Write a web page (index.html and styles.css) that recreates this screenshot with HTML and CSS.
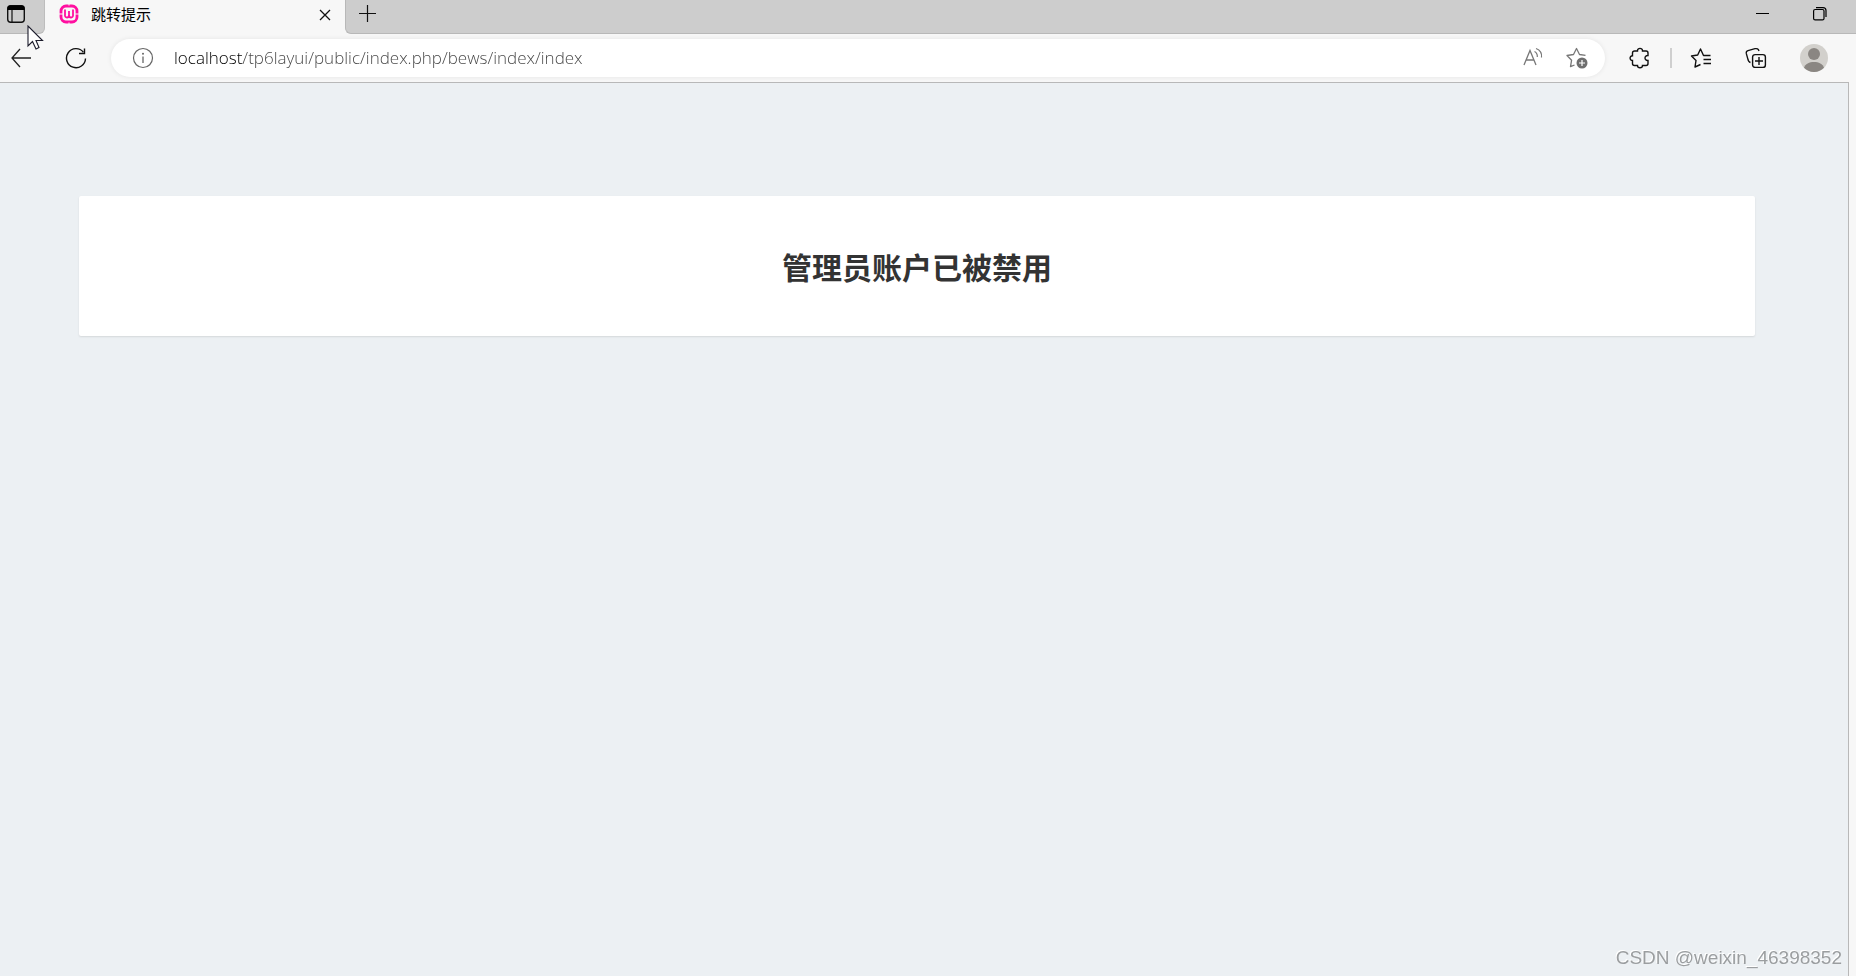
FILE: index.html
```html
<!DOCTYPE html>
<html lang="zh-CN">
<head>
  <meta charset="UTF-8" />
  <meta name="viewport" content="width=device-width, initial-scale=1.0"/>
  <title>跳转提示</title>
  <link rel="stylesheet" href="styles.css">
</head>
<body>
  <header class="browser">
    <div class="tabs">
      <div class="tabs-left">
        <button type="button" class="icon-btn" aria-label="标签页操作">
          <svg width="20" height="20" viewBox="0 0 20 20"><rect x="1.7" y="1.7" width="16.6" height="16.6" rx="3" fill="none" stroke="#111" stroke-width="1.4"/><path d="M1.5 6V4.5a3 3 0 0 1 3-3h11a3 3 0 0 1 3 3V6z" fill="#000"/><path d="M6 6v12" stroke="#111" stroke-width="1.2"/></svg>
        </button>
      </div>
      <div class="tab">
        <svg width="20" height="20" viewBox="0 0 20 20"><rect x="2" y="2" width="16" height="16" rx="5" fill="none" stroke="#ff0fa0" stroke-width="2.8"/><path d="M0 10h4M16 10h4M10 0v1.5M10 18.5v1.5" stroke="#f7f7f7" stroke-width="1"/><path d="M6 5.5v5.5a2 2 0 0 0 2 2.5q2 0 2-2.5V7v4q0 2.5 2 2.5a2 2 0 0 0 2-2.5V5.5" fill="none" stroke="#ff0fa0" stroke-width="1.8"/></svg>
        <span class="tab-title">跳转提示</span>
        <button type="button" class="icon-btn" aria-label="关闭标签页">
          <svg width="12" height="20" viewBox="0 0 12 20"><path d="M1 6l10 10M11 6L1 16" stroke="#111" stroke-width="1.3"/></svg>
        </button>
      </div>
      <div class="tabs-right">
        <button type="button" class="icon-btn" aria-label="新建标签页">
          <svg width="20" height="20" viewBox="0 0 20 20"><path d="M9.5 1v17M1 9.5h17" stroke="#111" stroke-width="1.2"/></svg>
        </button>
        <div class="window-btns">
          <button type="button" class="icon-btn" aria-label="最小化">
            <svg width="14" height="20" viewBox="0 0 14 20"><path d="M0 9.5h13" stroke="#000"/></svg>
          </button>
          <button type="button" class="icon-btn" aria-label="还原">
            <svg width="14" height="20" viewBox="0 0 14 20"><rect x=".6" y="5.5" width="10.4" height="10.4" rx="1.5" fill="none" stroke="#000" stroke-width="1.2"/><path d="M3 3.6h7a3 3 0 0 1 3 3V13" fill="none" stroke="#000" stroke-width="1.2"/></svg>
          </button>
        </div>
      </div>
    </div>

    <div class="toolbar">
      <button type="button" class="icon-btn" aria-label="返回">
        <svg width="22" height="22" viewBox="0 0 22 22"><path d="M10 2L2 11l8 9M2 11h19" fill="none" stroke="#222" stroke-width="1.3"/></svg>
      </button>
      <button type="button" class="icon-btn refresh" aria-label="刷新">
        <svg width="22" height="22" viewBox="0 0 22 22"><path d="M20.5 11.5A9.5 9.5 0 1 1 18.4 5.2" fill="none" stroke="#111" stroke-width="1.4"/><path d="M19.5 1.5V6.5H14" fill="none" stroke="#111" stroke-width="1.4"/></svg>
      </button>
      <div class="address">
        <svg width="22" height="22" viewBox="0 0 22 22"><circle cx="11" cy="11" r="9.5" fill="none" stroke="#666" stroke-width="1.2"/><path d="M11 9.5V16" stroke="#666" stroke-width="1.3"/><circle cx="11" cy="6.7" r="1" fill="#666"/></svg>
        <input class="url" type="text" aria-label="地址栏" value="localhost/tp6layui/public/index.php/bews/index/index">
        <button type="button" class="icon-btn" aria-label="大声朗读">
          <svg width="22" height="22" viewBox="0 0 22 22"><path d="M1 18L7 3.5 13 18M3 13h8" fill="none" stroke="#777" stroke-width="1.3"/><path d="M11.5 4.5c2 1 3 3 2.8 5.5M13 1.5c4 1.5 6 5 5.5 9" fill="none" stroke="#777" stroke-width="1.2"/></svg>
        </button>
        <button type="button" class="icon-btn" aria-label="添加到收藏夹">
          <svg width="24" height="24" viewBox="0 0 24 24"><path d="M20.5 9.3L14.5 8.5 11.5 2.5 8.5 8.5 2 9.5 6.6 14.2 5.5 20.7 9.5 19" fill="none" stroke="#777" stroke-width="1.3" stroke-linejoin="round"/><circle cx="17" cy="17" r="5.5" fill="#6e6e6e"/><path d="M17 14v6M14 17h6" stroke="#fff" stroke-width="1.2"/></svg>
        </button>
      </div>
      <div class="tools">
        <button type="button" class="icon-btn" aria-label="扩展">
          <svg width="22" height="22" viewBox="0 0 22 22"><path d="M5.5 4H8.5C8.3 0.5 13.7 0.5 13.5 4H17a2 2 0 0 1 2 2V8.5C15 8 15 14 19 13.5V16.5a2 2 0 0 1-2 2H13.5C13.5 21.5 8.5 21.5 8.5 18.5H5.5a2 2 0 0 1-2-2V13.5C0.3 13.5 0.3 8.7 3.5 8.7V6a2 2 0 0 1 2-2z" fill="none" stroke="#111" stroke-width="1.4"/></svg>
        </button>
        <span class="divider"></span>
        <button type="button" class="icon-btn" aria-label="收藏夹">
          <svg width="22" height="22" viewBox="0 0 22 22"><path d="M20.5 8.5H13.5L10.5 2 7.7 8 1.5 9 6 13.5 5 20 10.5 17.5" fill="none" stroke="#111" stroke-width="1.4" stroke-linejoin="round"/><path d="M13.5 12.5h7.5M13.5 16.5h7.5" stroke="#111" stroke-width="1.4"/></svg>
        </button>
        <button type="button" class="icon-btn" aria-label="集锦">
          <svg width="22" height="22" viewBox="0 0 22 22"><path d="M5.5 15.5C3.5 15 3 13 2.7 11.5L1.3 6.5C1 5 1.5 4 3 3.6L10 1.7C12 1.2 13.5 2 14 4" fill="none" stroke="#111" stroke-width="1.3"/><rect x="7.6" y="7.6" width="12.8" height="12.8" rx="2.5" fill="none" stroke="#111" stroke-width="1.4"/><path d="M14 10v8M10 14h8" stroke="#111" stroke-width="1.4"/></svg>
        </button>
        <button type="button" class="icon-btn" aria-label="个人资料">
          <svg width="28" height="28" viewBox="0 0 28 28"><circle cx="14" cy="14" r="14" fill="#d2d0cc"/><circle cx="14" cy="10" r="6" fill="#8a8682"/><path d="M4 23.8C6 16 22 16 24 23.8A14 14 0 0 1 4 23.8z" fill="#8a8682"/></svg>
        </button>
      </div>
    </div>
  </header>

  <main class="page">
    <div class="message">
      <h1>管理员账户已被禁用</h1>
    </div>
  </main>
  <div class="watermark">CSDN @weixin_46398352</div>

  <svg class="cursor" width="17" height="26" viewBox="0 0 17 26"><path d="M1 1v20l4.500-4.500L9 24l3-1.500-3-7h6.500z" fill="#fff" stroke="#1c1c2c" stroke-width="1.1"/></svg>
</body>
</html>
```

FILE: styles.css
```css
* { box-sizing: border-box; }
body { margin: 0; min-height: 100vh; display: flex; flex-direction: column; background: #f7f7f7; font-family: "Noto Sans CJK SC", sans-serif; color: #333; }
svg { display: block; flex-shrink: 0; }
.icon-btn { display: block; padding: 0; border: none; background: none; cursor: pointer; }

/* tabs */
.tabs { display: flex; height: 34px; }
.tabs-left, .tabs-right { background: #cdcdcd; border-bottom: 1px solid #b8b8b8; padding-top: 4px; }
.tabs-left { width: 45px; padding-left: 6px; border-right: 1px solid #bdbdbd; border-bottom-right-radius: 6px; }
.tabs-right { flex: 1; display: flex; align-items: flex-start; justify-content: space-between; padding-left: 12px; padding-right: 29px; border-left: 1px solid #b8b8b8; border-bottom-left-radius: 6px; }
.tab { width: 300px; display: flex; align-items: flex-start; gap: 12px; padding: 4px 14px 0; }
.tab-title { flex: 1; font-size: 15px; line-height: 20px; color: #000; }
.window-btns { display: flex; gap: 43px; }

/* toolbar */
.toolbar { display: flex; align-items: center; height: 48px; padding: 0 28px 0 10px; }
.refresh { margin-left: 33px; }
.address { flex: 1; display: flex; align-items: center; gap: 20px; height: 38px; margin-left: 24px; padding: 0 16px 0 21px; border-radius: 19px; background: #fff; box-shadow: 0 0 5px rgba(0,0,0,0.08); }
.url { flex: 1; min-width: 0; padding: 0; border: none; outline: none; font-family: "Open Sans", sans-serif; font-size: 17px; font-weight: 300; line-height: 24px; color: transparent; background: linear-gradient(to right, #000 69px, #444 69px); background-clip: text; -webkit-background-clip: text; }
.tools { display: flex; align-items: center; margin-left: 24px; }
.divider { width: 2px; height: 20px; margin: 0 18px 0 19px; background: #cfcfcf; }
.tools .icon-btn + .icon-btn { margin-left: 33px; }

/* page */
.page { flex: 1; margin-right: 7px; padding: 113px 93px 0 79px; background: #ecf0f3; border-top: 1px solid #b8b8b8; border-right: 1px solid #b8b8b8; }
.message { padding: 48px 20px; background: #fff; border-radius: 2px; box-shadow: 0 1px 2px rgba(0,0,0,0.1); text-align: center; }
h1 { margin: 0; font-size: 30px; line-height: 44px; font-weight: bold; }

.watermark { position: fixed; right: 14px; bottom: 6px; font-family: "Liberation Sans", sans-serif; font-size: 19px; line-height: 24px; color: #9b9ea0; text-shadow: -1px -1px 0 #fff; }
.cursor { position: absolute; left: 27px; top: 25px; pointer-events: none; }
```
